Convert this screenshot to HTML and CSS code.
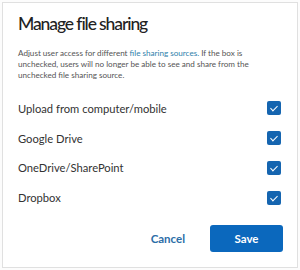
FILE: index.html
```html
<!DOCTYPE html>
<html lang="en">
  <head>
    <meta charset="UTF-8" />
    <title>Manage file sharing</title>
    <link rel="stylesheet" href="styles.css">
  </head>
  <body>
    <div class="dialog">
      <h1>Manage file sharing</h1>
      <p class="intro">
        Adjust user access for different <a href="#">file sharing sources.</a> If the box is
        unchecked, users will no longer be able to see and share from the
        unchecked file sharing source.
      </p>

      <div class="sources">
        <label class="source">
          <span>Upload from computer/mobile</span>
          <input type="checkbox" checked />
          <span class="box"></span>
        </label>
        <label class="source">
          <span>Google Drive</span>
          <input type="checkbox" checked />
          <span class="box"></span>
        </label>
        <label class="source">
          <span>OneDrive/SharePoint</span>
          <input type="checkbox" checked />
          <span class="box"></span>
        </label>
        <label class="source">
          <span>Dropbox</span>
          <input type="checkbox" checked />
          <span class="box"></span>
        </label>
      </div>

      <div class="actions">
        <button class="cancel">Cancel</button>
        <button class="save">Save</button>
      </div>
    </div>
  </body>
</html>
```

FILE: styles.css
```css
body {
  font-family: Lato, "Open Sans", sans-serif;
  background-color: #fcfcfc;
  margin: 0;
  padding: 2px;
}

.dialog {
  box-sizing: border-box;
  width: 296px;
  height: 266px;
  background-color: white;
  border: 1px solid #e0e0e0;
  padding: 9px 14px 0 15px;
}

h1 {
  margin: 0;
  font-size: 17.5px;
  line-height: 24px;
  font-weight: 500;
  letter-spacing: -1.1px;
  color: #222;
}

.intro {
  margin: 11.5px 0 0;
  font-size: 8.1px;
  line-height: 11px;
  color: #555;
}

.intro a {
  color: #2f7fab;
  text-decoration: none;
}

.sources {
  margin-top: 13px;
}

.source {
  display: flex;
  align-items: center;
  justify-content: space-between;
  height: 29.8px;
  font-size: 11.2px;
  color: #333;
}

.source input {
  display: none;
}

.box {
  width: 14px;
  height: 14px;
  margin-right: 2px;
  border-radius: 2px;
  background-color: #1565b0;
  position: relative;
}

.box::after {
  content: "";
  position: absolute;
  left: 4.5px;
  top: 3px;
  width: 3px;
  height: 6px;
  border: solid white;
  border-width: 0 1.5px 1.5px 0;
  transform: rotate(45deg);
}

.actions {
  display: flex;
  justify-content: flex-end;
  align-items: center;
  gap: 25px;
  margin-top: 12.5px;
}

button {
  font-family: inherit;
  font-size: 11.5px;
  font-weight: 700;
  border: none;
  cursor: pointer;
}

.cancel {
  background: none;
  color: #2c6da7;
  padding: 0;
}

.save {
  width: 73px;
  height: 27px;
  border-radius: 3px;
  background-color: #0b68bd;
  color: white;
}
```
